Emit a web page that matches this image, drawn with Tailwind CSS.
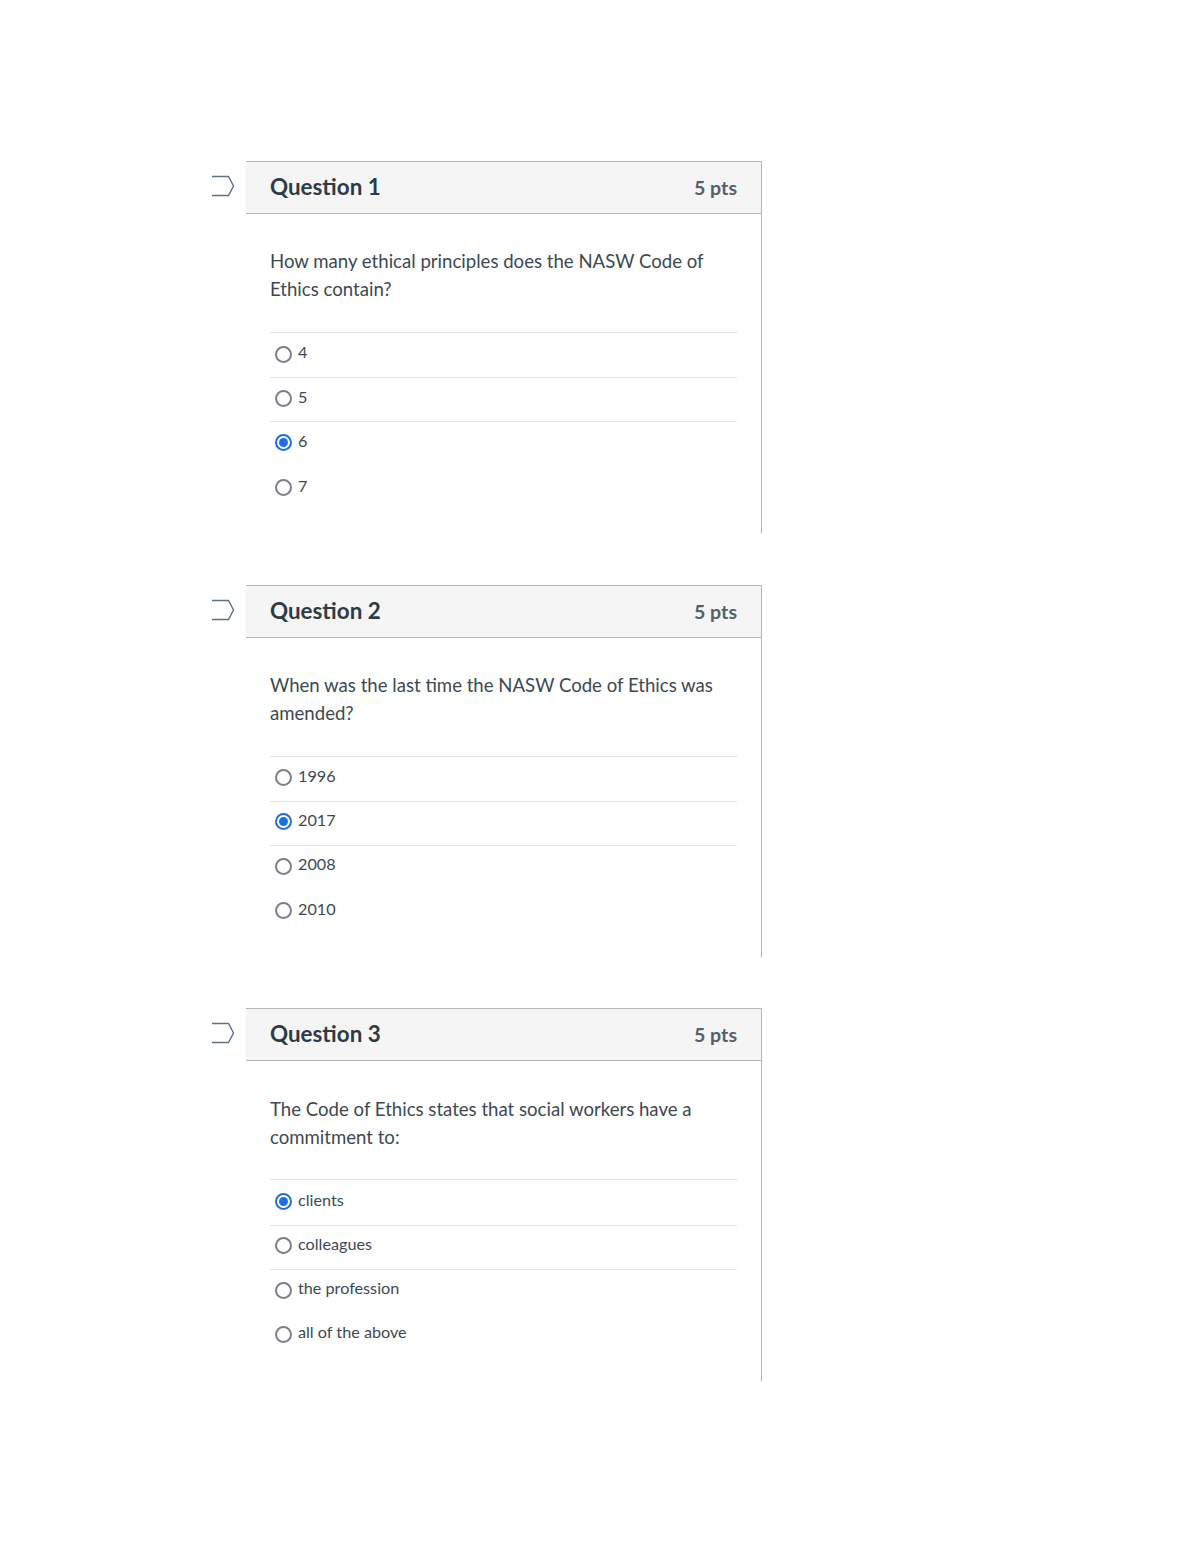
<!DOCTYPE html>
<html>
<head>
<meta charset="utf-8">
<script src="https://cdn.jsdelivr.net/npm/@tailwindcss/browser@4"></script>
</head>
<body class="bg-white font-['Lato',sans-serif] text-[#2d3b45]">
<main class="w-[1200px] h-[1553px] pt-[161px] pl-[211px] flex flex-col">

<section class="flex items-start">
  <svg class="w-[24px] h-[24px] mt-[13px] mr-[11px] shrink-0" viewBox="0 0 24 24" fill="none" stroke="#5b7184" stroke-width="1.4"><path d="M1 2.5H17.5L22.5 12L17.5 21.5H1"/></svg>
  <div class="w-[516px] h-[372px] border-r border-[#b5b5b5]">
    <header class="h-[53px] bg-[#f5f5f5] border-y border-[#b5b5b5] flex items-center justify-between px-[24px]">
      <h2 class="text-[22.4px] font-bold pb-[2px]">Question 1</h2>
      <span class="text-[19.6px] font-bold text-[#54616b]">5 pts</span>
    </header>
    <div class="px-[24px] pt-[33px]">
      <p class="text-[18.6px] leading-[28px] h-[85px] text-[#3c4952]">How many ethical principles does the NASW Code of Ethics contain?</p>
      <ul class="text-[16.2px] text-[#3c4952]">
        <li class="h-[45px] border-t border-[#e2e2e2] flex items-start pl-[5px] pt-[10px] gap-[6px]"><span class="w-[17px] h-[17px] mt-[3px] rounded-full border-2 border-[#7b7f8a]"></span><span class="leading-[20px] -mt-[1px]">4</span></li>
        <li class="h-[44px] border-t border-[#e2e2e2] flex items-start pl-[5px] pt-[9px] gap-[6px]"><span class="w-[17px] h-[17px] mt-[3px] rounded-full border-2 border-[#7b7f8a]"></span><span class="leading-[20px]">5</span></li>
        <li class="h-[45px] border-t border-[#e2e2e2] flex items-start pl-[5px] pt-[9px] gap-[6px]"><span class="w-[17px] h-[17px] mt-[3px] rounded-full border-2 border-[#1e6ee8] flex items-center justify-center"><span class="w-[9px] h-[9px] rounded-full bg-[#1e6ee8]"></span></span><span class="leading-[20px]">6</span></li>
        <li class="h-[44px] flex items-start pl-[5px] pt-[10px] gap-[6px]"><span class="w-[17px] h-[17px] mt-[3px] rounded-full border-2 border-[#7b7f8a]"></span><span class="leading-[20px]">7</span></li>
      </ul>
    </div>
  </div>
</section>

<section class="flex items-start mt-[52px]">
  <svg class="w-[24px] h-[24px] mt-[13px] mr-[11px] shrink-0" viewBox="0 0 24 24" fill="none" stroke="#5b7184" stroke-width="1.4"><path d="M1 2.5H17.5L22.5 12L17.5 21.5H1"/></svg>
  <div class="w-[516px] h-[372px] border-r border-[#b5b5b5]">
    <header class="h-[53px] bg-[#f5f5f5] border-y border-[#b5b5b5] flex items-center justify-between px-[24px]">
      <h2 class="text-[22.4px] font-bold pb-[2px]">Question 2</h2>
      <span class="text-[19.6px] font-bold text-[#54616b]">5 pts</span>
    </header>
    <div class="px-[24px] pt-[33px]">
      <p class="text-[18.6px] leading-[28px] h-[85px] text-[#3c4952]">When was the last time the NASW Code of Ethics was amended?</p>
      <ul class="text-[16.2px] text-[#3c4952]">
        <li class="h-[45px] border-t border-[#e2e2e2] flex items-start pl-[5px] pt-[9px] gap-[6px]"><span class="w-[17px] h-[17px] mt-[3px] rounded-full border-2 border-[#7b7f8a]"></span><span class="leading-[20px]">1996</span></li>
        <li class="h-[44px] border-t border-[#e2e2e2] flex items-start pl-[5px] pt-[8px] gap-[6px]"><span class="w-[17px] h-[17px] mt-[3px] rounded-full border-2 border-[#1e6ee8] flex items-center justify-center"><span class="w-[9px] h-[9px] rounded-full bg-[#1e6ee8]"></span></span><span class="leading-[20px]">2017</span></li>
        <li class="h-[45px] border-t border-[#e2e2e2] flex items-start pl-[5px] pt-[9px] gap-[6px]"><span class="w-[17px] h-[17px] mt-[3px] rounded-full border-2 border-[#7b7f8a]"></span><span class="leading-[20px] -mt-[1px]">2008</span></li>
        <li class="h-[44px] flex items-start pl-[5px] pt-[9px] gap-[6px]"><span class="w-[17px] h-[17px] mt-[3px] rounded-full border-2 border-[#7b7f8a]"></span><span class="leading-[20px]">2010</span></li>
      </ul>
    </div>
  </div>
</section>

<section class="flex items-start mt-[51px]">
  <svg class="w-[24px] h-[24px] mt-[13px] mr-[11px] shrink-0" viewBox="0 0 24 24" fill="none" stroke="#5b7184" stroke-width="1.4"><path d="M1 2.5H17.5L22.5 12L17.5 21.5H1"/></svg>
  <div class="w-[516px] h-[373px] border-r border-[#b5b5b5]">
    <header class="h-[53px] bg-[#f5f5f5] border-y border-[#b5b5b5] flex items-center justify-between px-[24px]">
      <h2 class="text-[22.4px] font-bold pb-[2px]">Question 3</h2>
      <span class="text-[19.6px] font-bold text-[#54616b]">5 pts</span>
    </header>
    <div class="px-[24px] pt-[34px]">
      <p class="text-[18.6px] leading-[28px] h-[84px] text-[#3c4952]">The Code of Ethics states that social workers have a commitment to:</p>
      <ul class="text-[16.2px] text-[#3c4952]">
        <li class="h-[46px] border-t border-[#e2e2e2] flex items-start pl-[5px] pt-[10px] gap-[6px]"><span class="w-[17px] h-[17px] mt-[3px] rounded-full border-2 border-[#1e6ee8] flex items-center justify-center"><span class="w-[9px] h-[9px] rounded-full bg-[#1e6ee8]"></span></span><span class="leading-[20px]">clients</span></li>
        <li class="h-[44px] border-t border-[#e2e2e2] flex items-start pl-[5px] pt-[8px] gap-[6px]"><span class="w-[17px] h-[17px] mt-[3px] rounded-full border-2 border-[#7b7f8a]"></span><span class="leading-[20px]">colleagues</span></li>
        <li class="h-[45px] border-t border-[#e2e2e2] flex items-start pl-[5px] pt-[9px] gap-[6px]"><span class="w-[17px] h-[17px] mt-[3px] rounded-full border-2 border-[#7b7f8a]"></span><span class="leading-[20px] -mt-[1px]">the profession</span></li>
        <li class="h-[44px] flex items-start pl-[5px] pt-[9px] gap-[6px]"><span class="w-[17px] h-[17px] mt-[3px] rounded-full border-2 border-[#7b7f8a]"></span><span class="leading-[20px] -mt-[1px]">all of the above</span></li>
      </ul>
    </div>
  </div>
</section>

</main>
</body>
</html>
